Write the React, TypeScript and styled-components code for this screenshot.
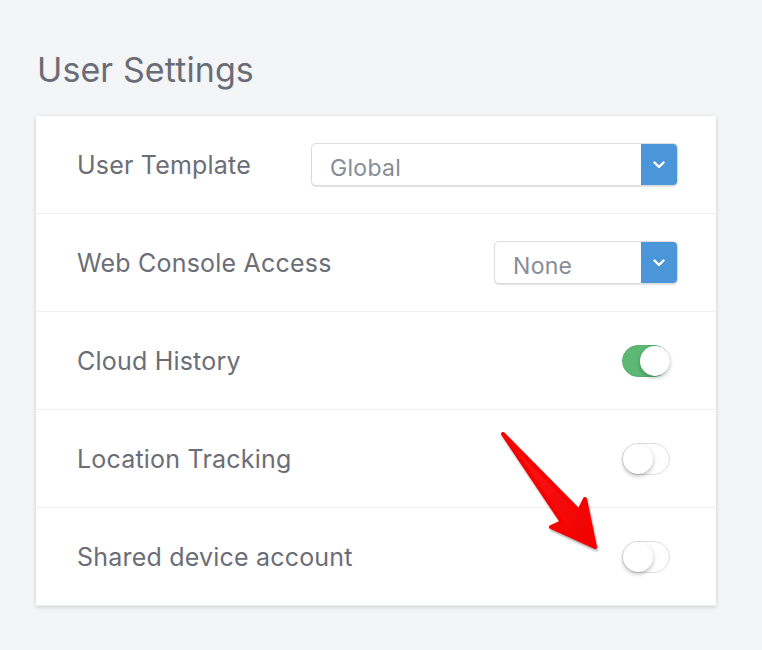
import React from "react";
import styled, { createGlobalStyle } from "styled-components";

const Global = createGlobalStyle`
  html, body { margin: 0; padding: 0; background: #f4f5f7; }
  body { font-family: Inter, "Noto Sans", "Liberation Sans", sans-serif; -webkit-font-smoothing: antialiased; }
`;

const Page = styled.div`
  width: 762px;
  height: 650px;
  box-sizing: border-box;
  padding: 0 46px 0 36px;
  background: #f4f5f7;
  position: relative;
`;

const Title = styled.h1`
  margin: 0 0 22px;
  padding: 46px 0 0 1px;
  font-size: 34px;
  line-height: 48px;
  font-weight: 400;
  color: #6a6d75;
  letter-spacing: 0.1px;
`;

const Card = styled.div`
  position: relative;
  background: #ffffff;
  box-shadow: 0 1px 4px rgba(0, 0, 0, 0.18);
`;

const Row = styled.div`
  height: 97px;
  display: flex;
  align-items: center;
  justify-content: space-between;
  padding: 0 38px 0 41px;
  border-bottom: 1px solid #eeeff0;
  &:last-child { border-bottom: none; }
`;

const Label = styled.span`
  font-size: 25px;
  color: #6b6e76;
  letter-spacing: 0.2px;
`;

const Select = styled.div<{ $w: number }>`
  width: ${(p) => p.$w}px;
  height: 43px;
  box-sizing: border-box;
  display: flex;
  border-radius: 5px;
  border: 1px solid #dcdcdc;
  box-shadow: 0 1px 1px rgba(0, 0, 0, 0.12);
  overflow: hidden;
  background: #fff;
`;

const SelectValue = styled.span`
  flex: 1;
  padding: 6px 0 0 18px;
  font-size: 23px;
  line-height: 36px;
  color: #878d96;
  letter-spacing: 0.3px;
`;

const SelectButton = styled.span`
  width: 36px;
  background: #4a96d9;
  display: flex;
  align-items: center;
  justify-content: center;
`;

const Switch = styled.span<{ $on?: boolean }>`
  position: relative;
  width: 48px;
  height: 32px;
  box-sizing: border-box;
  border-radius: 16px;
  margin-right: 8px;
  background: ${(p) => (p.$on ? "#5cb874" : "#ffffff")};
  border: 1px solid ${(p) => (p.$on ? "#56b06e" : "#dedede")};
`;

const Knob = styled.span<{ $on?: boolean }>`
  position: absolute;
  top: 0;
  left: ${(p) => (p.$on ? "17px" : "0")};
  width: 30px;
  height: 30px;
  border-radius: 50%;
  background: #fff;
  box-shadow: ${(p) =>
    p.$on ? "0 2px 4px rgba(0,0,0,0.25)" : "0 2px 4px rgba(0,0,0,0.28)"};
`;

const Arrow = styled.svg`
  position: absolute;
  left: 460px;
  top: 310px;
  overflow: visible;
  filter: drop-shadow(1px 2px 1px rgba(0, 0, 0, 0.35));
`;

const Chevron = () => (
  <svg width="12" height="8" viewBox="0 0 12 8">
    <path d="M1.5 1.5 L6 6 L10.5 1.5" fill="none" stroke="#fff" strokeWidth="2.4" strokeLinecap="round" strokeLinejoin="round" />
  </svg>
);

const Dropdown = ({ w, value }: { w: number; value: string }) => (
  <Select $w={w}>
    <SelectValue>{value}</SelectValue>
    <SelectButton>
      <Chevron />
    </SelectButton>
  </Select>
);

const Toggle = ({ on }: { on?: boolean }) => (
  <Switch $on={on}>
    <Knob $on={on} />
  </Switch>
);

export default function App() {
  return (
    <Page>
      <Global />
      <Title>User Settings</Title>
      <Card>
        <Row>
          <Label>User Template</Label>
          <Dropdown w={367} value="Global" />
        </Row>
        <Row>
          <Label>Web Console Access</Label>
          <Dropdown w={184} value="None" />
        </Row>
        <Row>
          <Label>Cloud History</Label>
          <Toggle on />
        </Row>
        <Row>
          <Label>Location Tracking</Label>
          <Toggle />
        </Row>
        <Row>
          <Label>Shared device account</Label>
          <Toggle />
        </Row>
        <Arrow width="110" height="130" viewBox="0 0 110 130">
          <defs>
            <linearGradient id="ar" x1="0" y1="0" x2="1" y2="1">
              <stop offset="0" stopColor="#ff1a1a" />
              <stop offset="1" stopColor="#ee0000" />
            </linearGradient>
          </defs>
          <path
            d="M7 8 L83 85 L89 73 L99 121 L55 101 L66 96 Z"
            fill="url(#ar)"
            stroke="#f80000"
            strokeWidth="4"
            strokeLinejoin="round"
          />
        </Arrow>
      </Card>
    </Page>
  );
}
